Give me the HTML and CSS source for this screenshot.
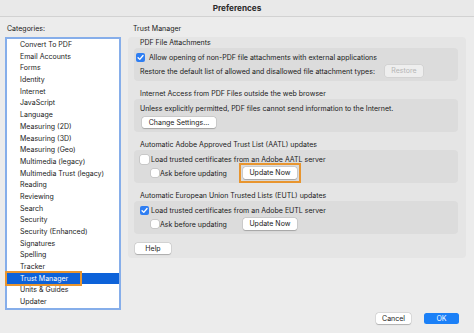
FILE: index.html
```html
<!DOCTYPE html>
<html>
<head>
<meta charset="utf-8">
<title>Preferences</title>
<link rel="stylesheet" href="styles.css">
</head>
<body>
<div class="window">
  <div class="titlebar">Preferences</div>
  <div class="main">
    <div class="left">
      <div class="label">Categories:</div>
      <ul class="list">
        <li>Convert To PDF</li>
        <li>Email Accounts</li>
        <li>Forms</li>
        <li>Identity</li>
        <li>Internet</li>
        <li>JavaScript</li>
        <li>Language</li>
        <li>Measuring (2D)</li>
        <li>Measuring (3D)</li>
        <li>Measuring (Geo)</li>
        <li>Multimedia (legacy)</li>
        <li>Multimedia Trust (legacy)</li>
        <li>Reading</li>
        <li>Reviewing</li>
        <li>Search</li>
        <li>Security</li>
        <li>Security (Enhanced)</li>
        <li>Signatures</li>
        <li>Spelling</li>
        <li>Tracker</li>
        <li class="sel">Trust Manager<span class="hl hl-item"></span></li>
        <li>Units &amp; Guides</li>
        <li>Updater</li>
      </ul>
    </div>
    <div class="right">
      <div class="label label-right">Trust Manager</div>
      <div class="group">
        <div class="sec-label first">PDF File Attachments</div>
        <div class="box">
          <div class="row"><span class="cb on cb-tight"><svg viewBox="0 0 10 10" width="9" height="9"><path d="M2.3 5.2 L4.2 7.1 L7.8 2.8" fill="none" stroke="#fff" stroke-width="1.5" stroke-linecap="round" stroke-linejoin="round"/></svg></span>Allow opening of non-PDF file attachments with external applications</div>
          <div class="row">Restore the default list of allowed and disallowed file attachment types:<span class="btn disabled restore">Restore</span></div>
        </div>

        <div class="sec-label">Internet Access from PDF Files outside the web browser</div>
        <div class="box">
          <div class="row">Unless explicitly permitted, PDF files cannot send information to the Internet.</div>
          <div class="row"><span class="btn change">Change Settings...</span></div>
        </div>

        <div class="sec-label">Automatic Adobe Approved Trust List (AATL) updates</div>
        <div class="box">
          <div class="row"><span class="cb"></span>Load trusted certificates from an Adobe AATL server</div>
          <div class="row indent"><span class="cb"></span>Ask before updating<span class="btn update">Update Now<span class="hl hl-btn"></span></span></div>
        </div>

        <div class="sec-label">Automatic European Union Trusted Lists (EUTL) updates</div>
        <div class="box">
          <div class="row"><span class="cb on"><svg viewBox="0 0 10 10" width="9" height="9"><path d="M2.3 5.2 L4.2 7.1 L7.8 2.8" fill="none" stroke="#fff" stroke-width="1.5" stroke-linecap="round" stroke-linejoin="round"/></svg></span>Load trusted certificates from an Adobe EUTL server</div>
          <div class="row indent"><span class="cb"></span>Ask before updating<span class="btn update">Update Now</span></div>
        </div>

        <div class="help-row"><span class="btn help">Help</span></div>
      </div>
    </div>
  </div>
  <div class="footer">
    <span class="btn cancel">Cancel</span>
    <span class="btn primary">OK</span>
  </div>
</div>
</body>
</html>
```

FILE: styles.css
```css
* { box-sizing: border-box; }
html, body {
  margin: 0;
  padding: 0;
  background: #ececec;
}
body {
  font-family: Inter, "Liberation Sans", sans-serif;
  font-size: 7px;
  color: #1a1a1a;
  width: 474px;
  height: 333px;
  overflow: hidden;
}
.window {
  width: 474px;
  height: 333px;
  display: flex;
  flex-direction: column;
  background: #ececec;
}
.titlebar {
  height: 17px;
  line-height: 16px;
  text-align: center;
  font-weight: 700;
  font-size: 8.2px;
  color: #2a2a2a;
  background: #e9e9e9;
  border-bottom: 1px solid #d2d2d2;
}
.main {
  display: flex;
  padding: 7px 8px 0 5px;
}
.left {
  width: 116px;
  display: flex;
  flex-direction: column;
}
.label {
  height: 10px;
  line-height: 10px;
  padding-left: 2px;
  margin-bottom: 3px;
}
.list {
  list-style: none;
  margin: 0;
  padding: 0;
  height: 273px;
  border: 2px solid #86aeea;
  background: #fff;
}
.list li {
  position: relative;
  height: 11.7px;
  line-height: 11.7px;
  padding-left: 13px;
  white-space: nowrap;
}
.list li.sel {
  background: #0d62d9;
  color: #fff;
}
.hl {
  position: absolute;
  border: 2px solid #e8952f;
  pointer-events: none;
}
.hl-item {
  left: -2px;
  top: -1.5px;
  width: 77px;
  height: 15px;
}
.right {
  margin-left: 7px;
  width: 338px;
  display: flex;
  flex-direction: column;
}
.label-right {
  padding-left: 5px;
}
.group {
  height: 221px;
  background: #e5e5e5;
  border-radius: 4px;
  padding: 0 8px 0 6px;
  display: flex;
  flex-direction: column;
}
.sec-label {
  height: 10px;
  line-height: 10px;
  padding-left: 6px;
  margin-top: 8px;
}
.sec-label.first {
  margin-top: 1px;
}
.box {
  height: 33px;
  background: #dcdcdc;
  border-radius: 4px;
  padding: 3px 6px;
  display: flex;
  flex-direction: column;
  gap: 2px;
}
.row {
  height: 12px;
  display: flex;
  align-items: center;
  white-space: nowrap;
}
.row.indent {
  padding-left: 11px;
}
.cb {
  width: 9px;
  height: 9px;
  border-radius: 2px;
  background: #fff;
  box-shadow: 0 0 0 0.5px rgba(0,0,0,0.18);
  margin-right: 2px;
  display: inline-flex;
  align-items: center;
  justify-content: center;
  flex: none;
}
.row.indent .cb {
  width: 8px;
  height: 8px;
  margin-right: 1px;
}
.cb.on {
  background: #2f7ef2;
  box-shadow: none;
}
.cb.cb-tight {
  margin-left: -4px;
  margin-right: 4px;
}
.btn {
  position: relative;
  display: inline-block;
  height: 11px;
  line-height: 11px;
  padding: 0 8px;
  text-align: center;
  background: #fff;
  border-radius: 2.5px;
  box-shadow: 0 0 0 0.5px rgba(0,0,0,0.12), 0 0.5px 1px rgba(0,0,0,0.2);
  color: #1a1a1a;
  white-space: nowrap;
}
.btn.disabled {
  color: #b5b5b5;
  background: #eeeeee;
  box-shadow: 0 0 0 0.5px rgba(0,0,0,0.08);
}
.restore {
  margin-left: 10px;
  width: 38px;
  padding: 0;
  height: 12px;
  line-height: 12px;
}
.change {
  margin-left: 2px;
  width: 74px;
  padding: 0;
}
.update {
  margin-left: 16px;
  width: 54px;
  padding: 0;
  height: 12px;
  line-height: 12px;
}
.hl-btn {
  left: -4px;
  top: -4px;
  width: 62px;
  height: 20px;
  border-width: 2.5px;
}
.help-row {
  margin-top: 9px;
  padding-left: 1px;
}
.help {
  width: 36px;
  padding: 0;
}
.footer {
  display: flex;
  justify-content: flex-end;
  gap: 13px;
  padding: 3px 15px 0 0;
}
.cancel, .primary {
  width: 35px;
  padding: 0;
}
.primary {
  background: #1b80f7;
  color: #fff;
  box-shadow: none;
}
```
